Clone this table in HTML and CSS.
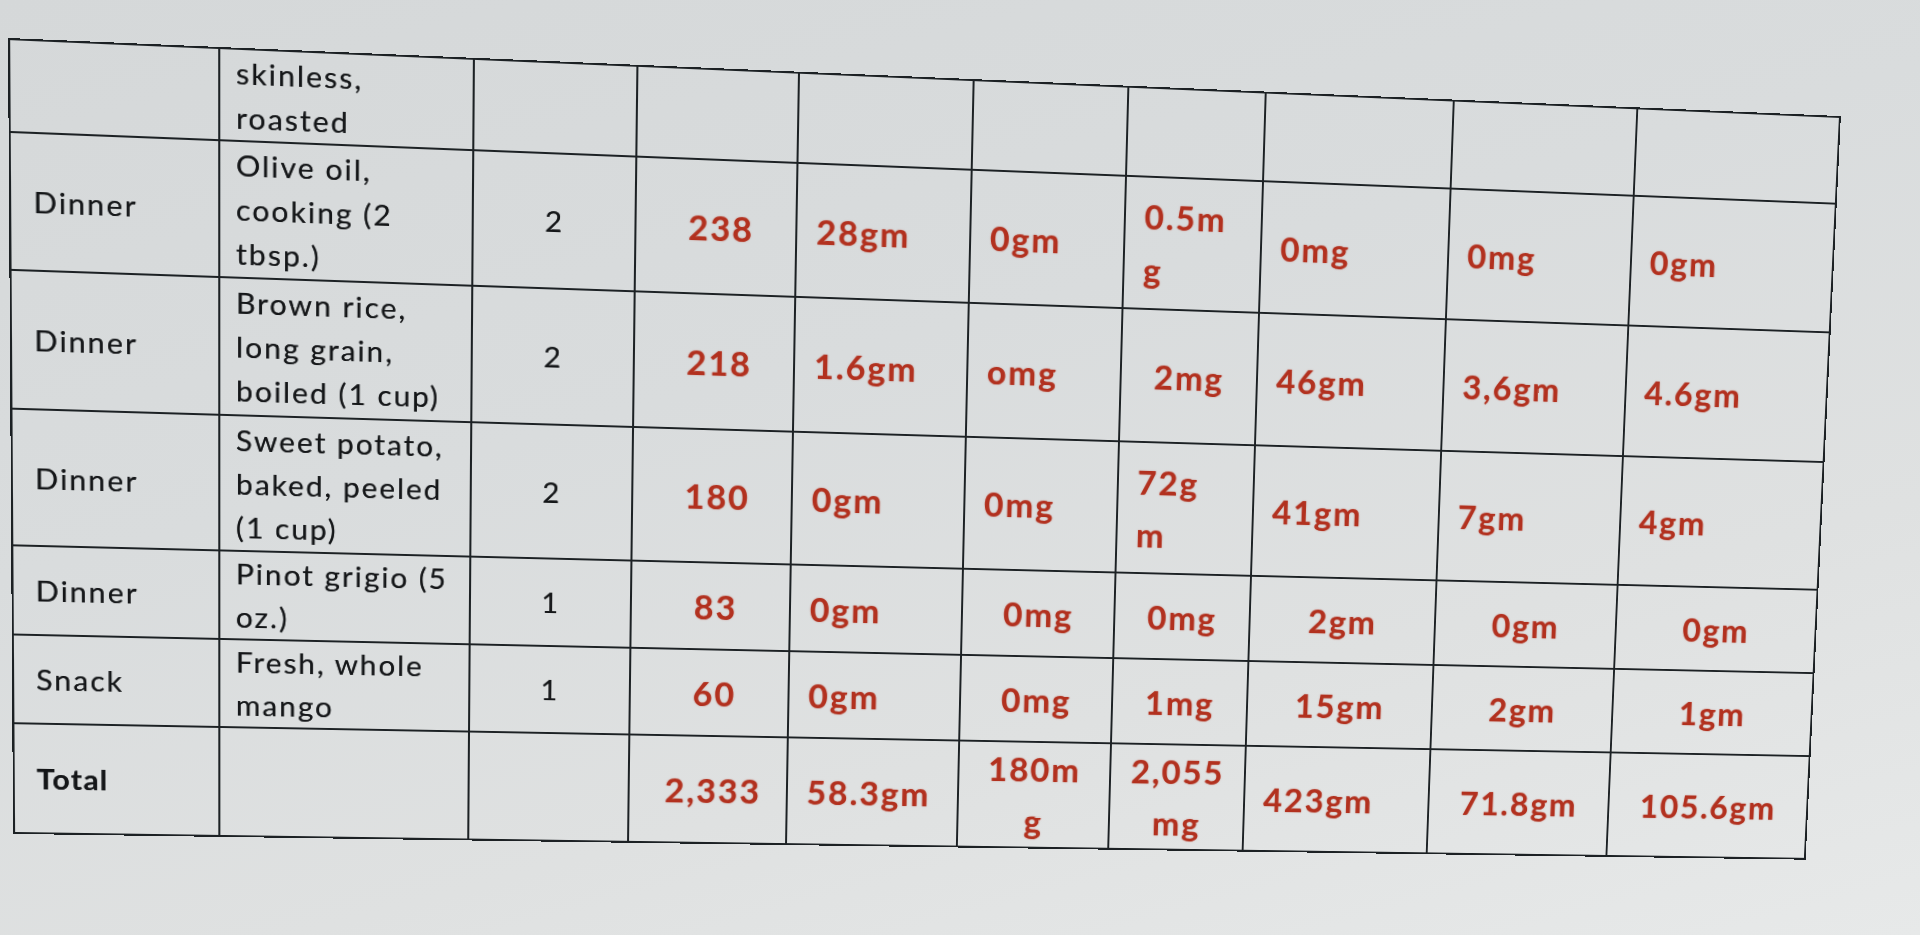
FILE: index.html
```html
<!DOCTYPE html>
<html lang="en">
<head>
<meta charset="utf-8">
<title>Meal nutrition table</title>
<link rel="stylesheet" href="styles.css">
</head>
<body>
<div class="sheet">
  <table class="diet">
    <colgroup>
      <col class="w-meal"><col class="w-food"><col class="w-qty"><col class="w-cal"><col class="w-fat">
      <col class="w-chol"><col class="w-sod"><col class="w-carb"><col class="w-fib"><col class="w-pro">
    </colgroup>
    <tbody>
      <tr class="row-a">
        <td class="meal"></td>
        <td class="food">skinless,<br>roasted</td>
        <td></td><td></td><td></td><td></td><td></td><td></td><td></td><td></td>
      </tr>
      <tr class="row-b">
        <td class="meal">Dinner</td>
        <td class="food">Olive oil,<br>cooking (2<br>tbsp.)</td>
        <td class="qty">2</td>
        <td class="num c cal">238</td>
        <td class="num">28gm</td>
        <td class="num">0gm</td>
        <td class="num">0.5m<br>g</td>
        <td class="num">0mg</td>
        <td class="num">0mg</td>
        <td class="num">0gm</td>
      </tr>
      <tr class="row-c">
        <td class="meal">Dinner</td>
        <td class="food">Brown rice,<br>long grain,<br>boiled (1 cup)</td>
        <td class="qty">2</td>
        <td class="num c cal">218</td>
        <td class="num">1.6gm</td>
        <td class="num">omg</td>
        <td class="num c">2mg</td>
        <td class="num">46gm</td>
        <td class="num">3,6gm</td>
        <td class="num">4.6gm</td>
      </tr>
      <tr class="row-d">
        <td class="meal">Dinner</td>
        <td class="food">Sweet potato,<br>baked, peeled<br>(1 cup)</td>
        <td class="qty">2</td>
        <td class="num c cal">180</td>
        <td class="num">0gm</td>
        <td class="num">0mg</td>
        <td class="num">72g<br>m</td>
        <td class="num">41gm</td>
        <td class="num">7gm</td>
        <td class="num">4gm</td>
      </tr>
      <tr class="row-e">
        <td class="meal">Dinner</td>
        <td class="food">Pinot grigio (5<br>oz.)</td>
        <td class="qty">1</td>
        <td class="num c cal">83</td>
        <td class="num">0gm</td>
        <td class="num c">0mg</td>
        <td class="num c">0mg</td>
        <td class="num c">2gm</td>
        <td class="num c">0gm</td>
        <td class="num c">0gm</td>
      </tr>
      <tr class="row-f">
        <td class="meal">Snack</td>
        <td class="food">Fresh, whole<br>mango</td>
        <td class="qty">1</td>
        <td class="num c cal">60</td>
        <td class="num">0gm</td>
        <td class="num c">0mg</td>
        <td class="num c">1mg</td>
        <td class="num c">15gm</td>
        <td class="num c">2gm</td>
        <td class="num c">1gm</td>
      </tr>
      <tr class="row-g">
        <td class="meal total">Total</td>
        <td class="food"></td>
        <td class="qty"></td>
        <td class="num c cal">2,333</td>
        <td class="num">58.3gm</td>
        <td class="num c">180m<br>g</td>
        <td class="num c">2,055<br>mg</td>
        <td class="num">423gm</td>
        <td class="num c">71.8gm</td>
        <td class="num c">105.6gm</td>
      </tr>
    </tbody>
  </table>
</div>
</body>
</html>
```
FILE: styles.css
```css
html, body {
  margin: 0;
  padding: 0;
  width: 100%;
  height: 100%;
  overflow: hidden;
}

body {
  background:
    linear-gradient(165deg, #d5d8d9 0%, #d9dcdd 40%, #dfe1e1 70%, #e7e9e9 100%);
  font-family: Lato, "Open Sans", "Liberation Sans", sans-serif;
  color: #141618;
}

.sheet {
  width: 1831px;
  height: 792px;
  transform-origin: 0 0;
  transform: matrix3d(1.069740, 0.046999, 0, 0.000037923,
                      0.006702, 1.024828, 0, 0.000029913,
                      0, 0, 1, 0,
                      8, 38, 0, 1);
}

.diet {
  width: 1831px;
  height: 792px;
  border-collapse: collapse;
  table-layout: fixed;
}

.w-meal { width: 198px; }
.w-food { width: 244px; }
.w-qty  { width: 159px; }
.w-cal  { width: 159px; }
.w-fat  { width: 174px; }
.w-chol { width: 156px; }
.w-sod  { width: 140px; }
.w-carb { width: 194px; }
.w-fib  { width: 192px; }
.w-pro  { width: 215px; }

.row-a { height: 91px; }
.row-b { height: 136px; }
.row-c { height: 138px; }
.row-d { height: 137px; }
.row-e { height: 89px; }
.row-f { height: 90px; }
.row-g { height: 111px; }

.diet td {
  border: 2px solid #1c2124;
  padding: 0;
  vertical-align: middle;
  overflow: hidden;
  white-space: nowrap;
}

.meal,
.food,
.qty {
  font-size: 29px;
  line-height: 44px;
  letter-spacing: 1.9px;
  text-shadow: 0 0 0.6px rgba(20, 22, 24, 0.7);
}

.meal {
  padding-left: 21px !important;
}

.total {
  font-weight: 700;
  letter-spacing: 1.2px;
}

.food {
  padding-left: 15px !important;
}

.qty {
  text-align: center;
}

.num {
  color: #b2311f;
  font-weight: 700;
  font-size: 34px;
  line-height: 55px;
  letter-spacing: 2px;
  padding-left: 19px !important;
  text-shadow: 0 0 1.5px rgba(178, 49, 31, 0.55);
}

.num.c {
  text-align: center;
  padding-left: 0 !important;
}

.num.c.cal {
  padding-left: 10px !important;
}
```
